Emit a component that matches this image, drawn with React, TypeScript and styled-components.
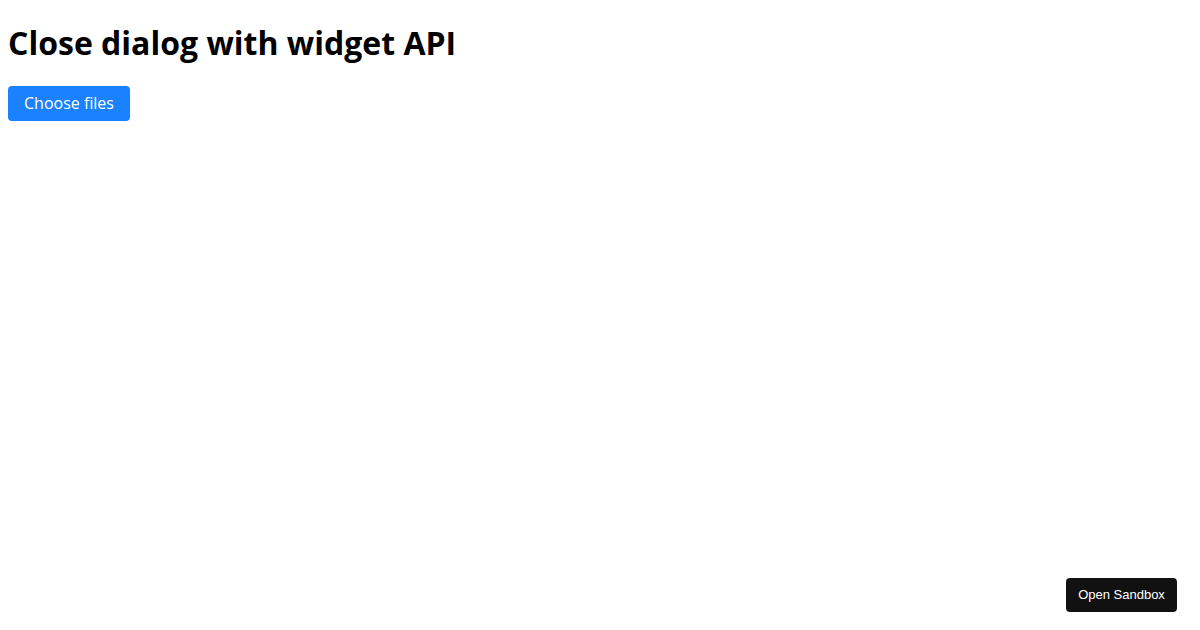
import styled, { createGlobalStyle } from 'styled-components'

const GlobalStyle = createGlobalStyle`
  body {
    margin: 8px;
    font-family: "Open Sans", sans-serif;
    background: #fff;
    color: #000;
  }
`

const Title = styled.h1`
  font-size: 32px;
  font-weight: 700;
  margin: 13px 0 22px;
`

const UploadButton = styled.button`
  display: block;
  height: 35px;
  padding: 0 16px 2px;
  border: none;
  border-radius: 4px;
  background: #1a82ff;
  color: #fff;
  font-family: "Open Sans", sans-serif;
  font-size: 16px;
  cursor: pointer;
`

const SandboxLink = styled.a`
  position: fixed;
  right: 23px;
  bottom: 18px;
  display: flex;
  align-items: center;
  justify-content: center;
  width: 111px;
  height: 34px;
  padding-bottom: 2px;
  box-sizing: border-box;
  border-radius: 4px;
  background: #111;
  color: #fff;
  font-family: "Liberation Sans", Arial, sans-serif;
  font-size: 13px;
  text-decoration: none;
`

export default function App() {
  return (
    <>
      <GlobalStyle />
      <Title>Close dialog with widget API</Title>
      <UploadButton>Choose files</UploadButton>
      <SandboxLink href="#">Open Sandbox</SandboxLink>
    </>
  )
}
